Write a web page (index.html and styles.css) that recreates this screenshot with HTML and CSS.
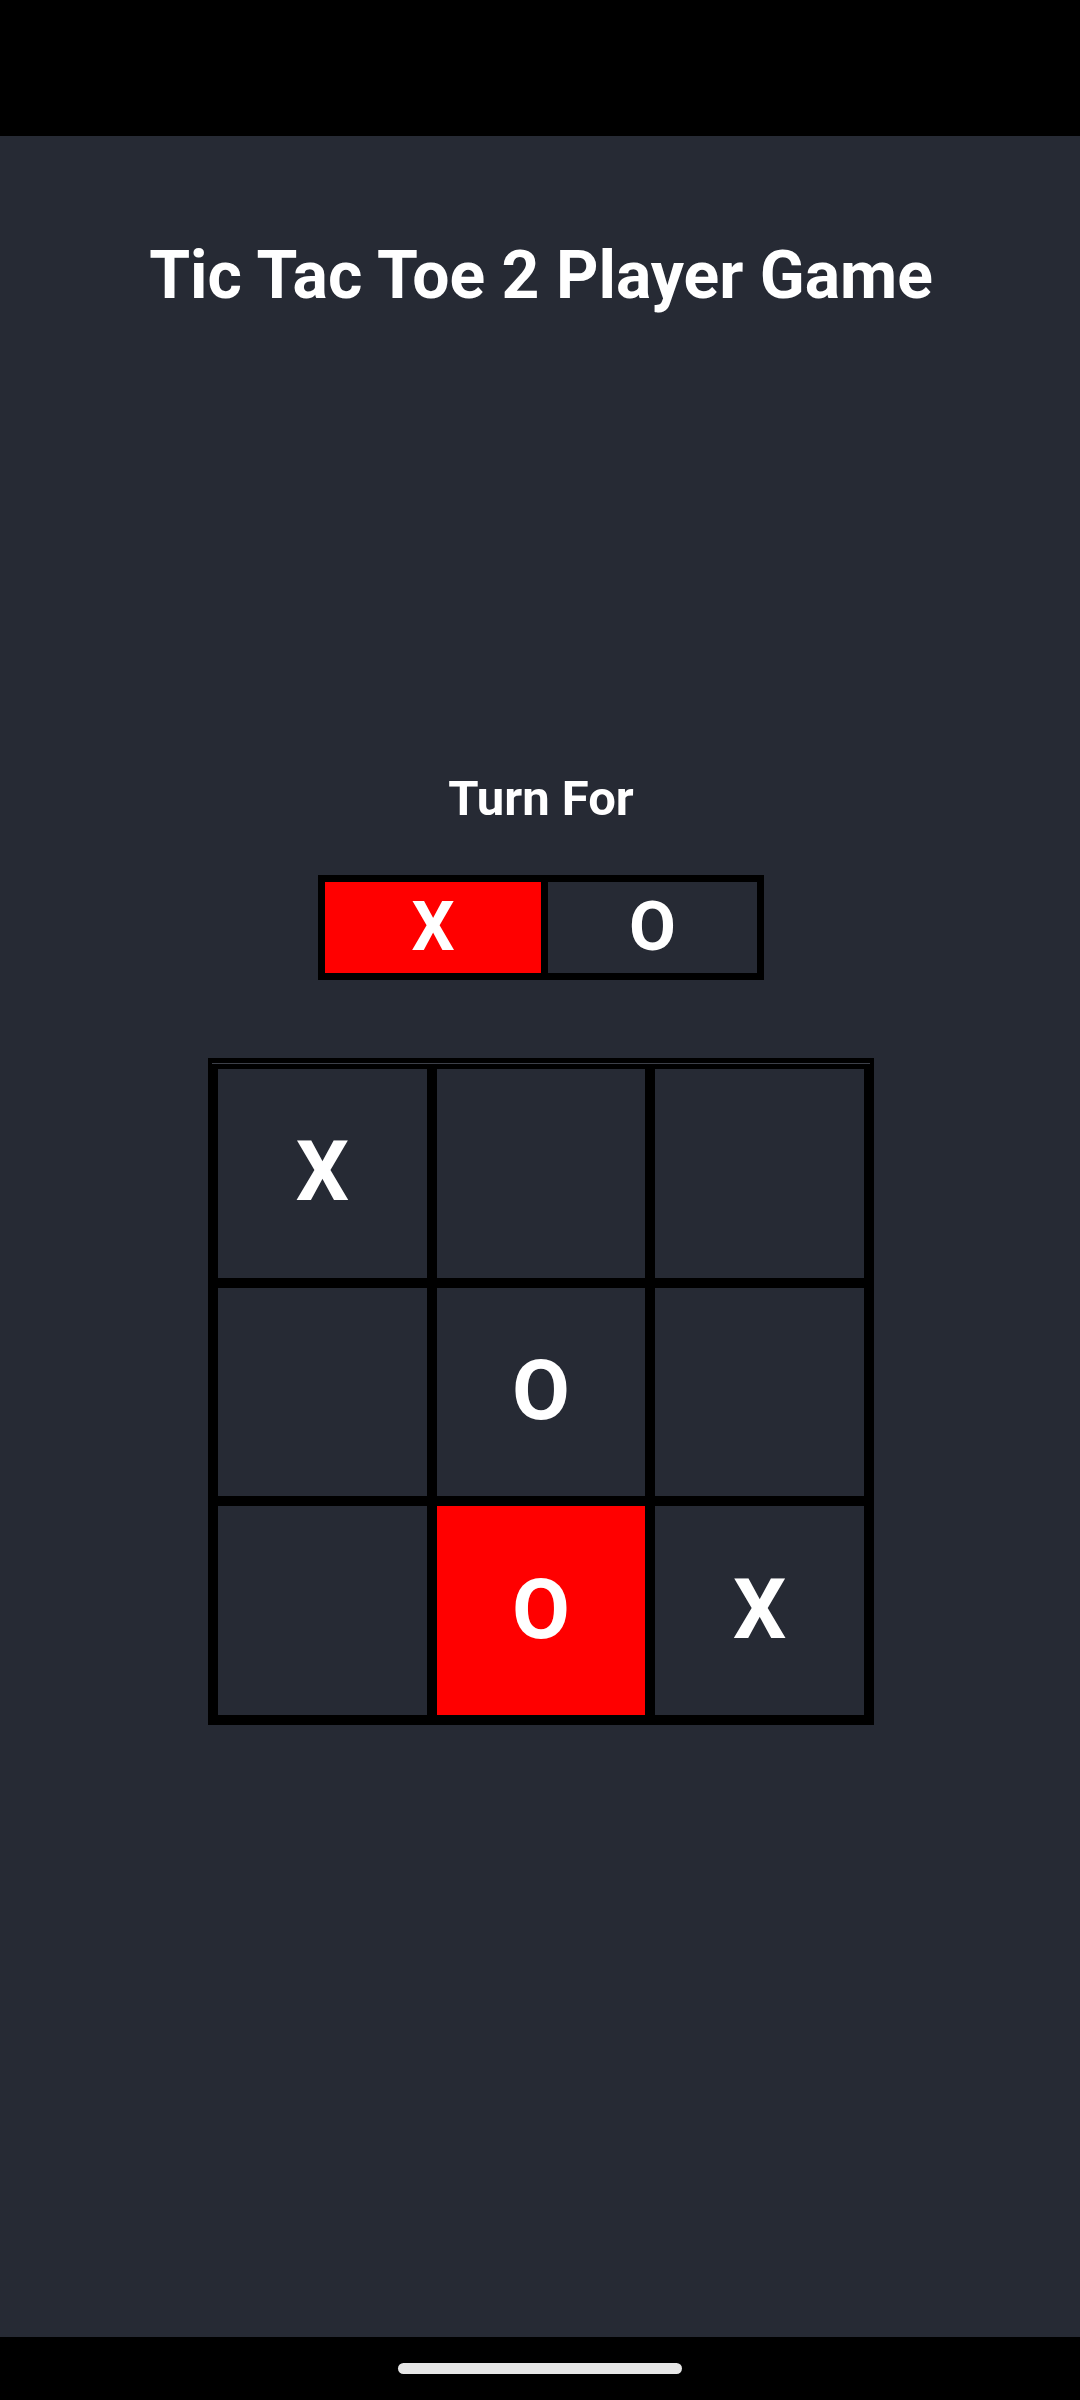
FILE: index.html
```html
<!DOCTYPE html>
<html>
<head>
<meta charset="utf-8">
<title>Tic Tac Toe</title>
<link rel="stylesheet" href="styles.css">
</head>
<body>
<div class="status-bar"></div>
<main class="app">
  <h1 class="title">Tic Tac Toe 2 Player Game</h1>
  <div class="turn-label">Turn For</div>
  <div class="turn-box">
    <div class="turn-cell turn-x active">X</div>
    <div class="turn-cell turn-o">O</div>
  </div>
  <div class="board">
    <div class="cell">X</div>
    <div class="cell"></div>
    <div class="cell"></div>
    <div class="cell"></div>
    <div class="cell">O</div>
    <div class="cell"></div>
    <div class="cell"></div>
    <div class="cell win">O</div>
    <div class="cell">X</div>
  </div>
</main>
<div class="nav-bar"><div class="nav-pill"></div></div>
</body>
</html>
```

FILE: styles.css
```css
html, body {
  margin: 0;
  padding: 0;
}
body {
  width: 1080px;
  height: 2400px;
  background: #262a34;
  font-family: Roboto, "Liberation Sans", sans-serif;
  color: #ffffff;
  display: flex;
  flex-direction: column;
  overflow: hidden;
}
.status-bar {
  height: 136px;
  background: #000000;
  flex: none;
}
.app {
  flex: 1;
  display: flex;
  flex-direction: column;
  align-items: center;
}
.title {
  margin: 100px 0 0 2px;
  font-size: 66px;
  line-height: 80px;
  font-weight: 700;
  text-align: center;
}
.turn-label {
  margin-top: 453px;
  margin-left: 2px;
  font-size: 49px;
  line-height: 60px;
  font-weight: 700;
}
.turn-box {
  margin-top: 46px;
  margin-left: 2px;
  display: flex;
  gap: 7px;
  padding: 7px;
  background: #000000;
}
.turn-cell {
  height: 91px;
  display: flex;
  align-items: center;
  justify-content: center;
  font-size: 68px;
  font-weight: 700;
  background: #262a34;
  padding-bottom: 2px;
  box-sizing: border-box;
}
.turn-x { width: 216px; }
.turn-o { width: 209px; }
.turn-cell.active { background: #ff0000; }
.board {
  position: relative;
  margin-top: 78px;
  margin-left: 2px;
  display: grid;
  grid-template-columns: repeat(3, 208.67px);
  grid-template-rows: repeat(3, 208.67px);
  gap: 10px;
  padding: 11px 10px 10px 10px;
  background: #000000;
}
.board::before {
  content: "";
  position: absolute;
  top: 5px;
  left: 4px;
  right: 4px;
  height: 1px;
  background: #3d4049;
}
.cell {
  background: #262a34;
  display: flex;
  align-items: center;
  justify-content: center;
  font-size: 84px;
  font-weight: 700;
  padding-bottom: 3px;
  box-sizing: border-box;
}
.cell.win { background: #ff0000; }
.nav-bar {
  height: 63px;
  background: #000000;
  flex: none;
  display: flex;
  justify-content: center;
  padding-top: 26px;
  box-sizing: border-box;
}
.nav-pill {
  width: 284px;
  height: 11px;
  border-radius: 6px;
  background: #e6e6e6;
}
```
